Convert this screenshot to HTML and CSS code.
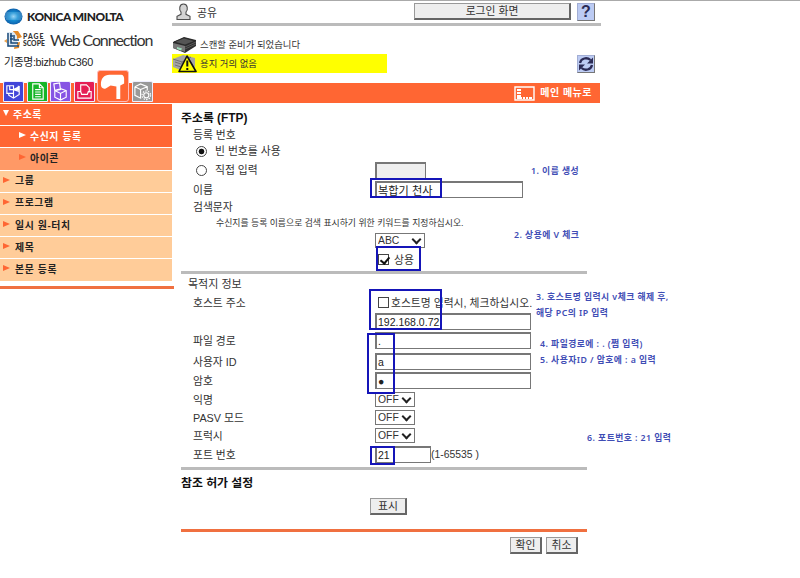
FILE: index.html
```
<!DOCTYPE html>
<html lang="ko">
<head>
  <meta charset="UTF-8" />
  <meta name="viewport" content="width=device-width, initial-scale=1.0"/>
  <title>PageScope Web Connection</title>
  <link rel="stylesheet" href="styles.css">
</head>
<body>
  <header class="header">
    <div class="brand">
      <div class="konica">
        <svg width="19" height="17" viewBox="0 0 19 17">
          <defs>
            <radialGradient id="globe" cx=".5" cy=".5" r=".6">
              <stop offset="0" stop-color="#8fd0f4"/>
              <stop offset=".4" stop-color="#168ed3"/>
              <stop offset="1" stop-color="#0a4f9c"/>
            </radialGradient>
          </defs>
          <ellipse cx="9.5" cy="8.5" rx="9" ry="8" fill="url(#globe)"/>
          <path d="M2 5h15M1 7h17M1 9h17M2 11h15" stroke="#c5e9fb" stroke-width=".4"/>
        </svg>
        <span>KONICA MINOLTA</span>
      </div>
      <div class="pagescope">
        <svg width="18" height="18" viewBox="0 0 18 18">
          <path d="M9 0h5l4 6-5 2z" fill="#e58a28"/>
          <path d="M0 10l6-4v8z" fill="#e9a04c"/>
          <path d="M11 12l5-1-1 6-5 1z" fill="#e58a28"/>
          <path d="M3 1h7l3 4v11H3z" fill="#dce8f4"/>
          <path d="M4 2v13h11M7 2v10h7M10 4v5h5M6 5h3M6 8h3" fill="none" stroke="#1b4978" stroke-width="1.500"/>
        </svg>
        <span class="ps-small"><span>PAGE</span><span>SCOPE</span></span>
        <span class="ps-title">Web Connection</span>
      </div>
      <div class="model">기종명:bizhub C360</div>
    </div>

    <div class="status">
      <div class="user-row">
        <svg class="person" width="15" height="18" viewBox="0 0 15 18">
          <path d="M1 16.500v-3.200l4-2V9C2.800 6.500 3.200 1 7.500 1s4.700 5.500 2.500 8v2.300l4 2v3.200z" fill="#d3d3d3" stroke="#4d4d4d" stroke-width="1.100"/>
        </svg>
        <span class="user-name">공유</span>
        <button class="btn login" type="button">로그인 화면</button>
        <button class="icon-btn" type="button">?</button>
      </div>
      <div class="device-row">
        <div class="messages">
          <div class="message">
            <svg width="25" height="16" viewBox="0 0 25 16">
              <path d="M1 5L12 0l12 3v6l-11 7L1 11z" fill="#2e2e2e"/>
              <path d="M2 5l10-4 11 3-10 4z" fill="#555" stroke="#222" stroke-width=".7"/>
              <path d="M1 6l12 3v6L1 11z" fill="#777"/>
              <path d="M5 10l5 1.500-1 2-4-1.500z" fill="#9fe0bd"/>
              <path d="M13 10l11-5M13 12l11-5" stroke="#777" stroke-width=".6"/>
            </svg>
            <span>스캔할 준비가 되었습니다</span>
          </div>
          <div class="message warning">
            <svg width="25" height="19" viewBox="0 0 25 19">
              <path d="M1 5l10-4 12 3v9l-10 5-12-5z" fill="#a5a5a5"/>
              <path d="M1 5l9 3v9M3 8l6 2M3 11l6 2M10 8l9-5" fill="none" stroke="#666" stroke-width=".8"/>
              <path d="M15 2L24 17.500H7z" fill="#ff0" stroke="#111" stroke-width="1.600" stroke-linejoin="round"/>
              <path d="M15.300 6.500v6M15.300 14v2" stroke="#111" stroke-width="2"/>
            </svg>
            <span>용지 거의 없음</span>
          </div>
        </div>
        <button class="icon-btn" type="button">
          <svg width="16" height="16" viewBox="0 0 16 16">
            <path d="M2 7c1-5 7-6 10.500-3M14 9c-1 5-7 6-10.500 3" fill="none" stroke="#2b2b55" stroke-width="2.300"/>
            <path d="M15 1.500v6H9zM1 14.500v-6h6z" fill="#2b2b55"/>
          </svg>
        </button>
      </div>
    </div>
  </header>

  <nav class="tabs">
    <span class="tab blue">
      <svg viewBox="0 0 20 20"><path d="M3 4h7v8H3zM6 4v4h9V4M10 8l6-3v8l-6 4-5-3v-2M10 8v9M10 8l6 2"/></svg>
    </span>
    <span class="tab green">
      <svg viewBox="0 0 20 20"><path d="M5 2h7l4 4v12H5zM12 2v4h4M7.500 8h6M7.500 10.500h6M7.500 13h6M7.500 15.500h6"/></svg>
    </span>
    <span class="tab purple">
      <svg viewBox="0 0 20 20"><path d="M3 2l6-1 1 7-6 1zM4 9l6-2 6 2v7l-6 3-6-3zM4 9l6 3 6-3M10 12v7"/></svg>
    </span>
    <span class="tab red">
      <svg viewBox="0 0 20 20"><path d="M6 11V3h6l3 3v5M3 10v7h14v-7h-3l-1 3H7l-1-3z"/></svg>
    </span>
    <span class="tab current">
      <svg viewBox="0 0 31 31"><path d="M3 14c0-6 3-10 9-10h12c2 0 3 2 3 4v5l-4 2v14h-4V16l-6-1-5 3c-3 1-5-1-5-4z" fill="#fff" stroke="none"/></svg>
    </span>
    <span class="tab gray">
      <svg viewBox="0 0 20 20"><path d="M2 5l6-3 7 3v4M2 5v9l6 3V8L2 5M8 8l7-3"/><circle cx="14" cy="14" r="2.700"/><circle cx="14" cy="14" r="4.500" stroke-dasharray="1.500 1.300"/></svg>
    </span>
    <a class="main-menu">
      <svg width="21" height="15" viewBox="0 0 21 15"><path d="M1 1h19v13H1z" fill="none" stroke="#fff" stroke-width="1.400"/><path d="M3 4h4M3 7h4M3 10h4M3 12h5M9 12h2M12 12h2M15 12h3" stroke="#fff" stroke-width="1.800"/></svg>
      <span>메인 메뉴로</span>
    </a>
  </nav>

  <div class="page">
    <aside class="sidebar">
      <ul class="menu">
        <li class="open">주소록</li>
        <li class="sub selected">수신지 등록</li>
        <li class="sub">아이콘</li>
        <li>그룹</li>
        <li>프로그램</li>
        <li>일시 원-터치</li>
        <li>제목</li>
        <li>본문 등록</li>
      </ul>
    </aside>

    <main class="content">
      <form>
        <h1>주소록 (FTP)</h1>
        <div class="row h16"><span class="label">등록 번호</span></div>
        <div class="row h18"><label class="label radio"><input type="radio" name="no" checked><span>빈 번호를 사용</span></label></div>
        <div class="row h20">
          <label class="label radio"><input type="radio" name="no"><span>직접 입력</span></label>
          <input class="text number" type="text" disabled>
        </div>
        <div class="row h18"><span class="label">이름</span><input class="text name" type="text" value="복합기 천사"></div>
        <div class="row h16"><span class="label">검색문자</span></div>
        <p class="hint">수신지를 등록 이름으로 검색 표시하기 위한 키워드를 지정하십시오.</p>
        <div class="row h16"><span class="label"></span><span class="select wide"><select><option>ABC</option></select></span></div>
        <div class="row h23"><span class="label"></span><label class="check favorite"><input type="checkbox" checked><span>상용</span></label></div>
        <hr>

        <h2>목적지 정보</h2>
        <div class="row h19"><span class="label">호스트 주소</span><label class="check host"><input type="checkbox"><span>호스트명 입력시, 체크하십시오.</span></label></div>
        <div class="row h18"><span class="label"></span><input class="text" type="text" value="192.168.0.72"></div>
        <div class="row h21"><span class="label">파일 경로</span><input class="text" type="text" value="."></div>
        <div class="row h20"><span class="label">사용자 ID</span><input class="text" type="text" value="a"></div>
        <div class="row h19"><span class="label">암호</span><input class="text" type="text" value="●"></div>
        <div class="row h18"><span class="label">익명</span><span class="select"><select><option>OFF</option></select></span></div>
        <div class="row h18"><span class="label">PASV 모드</span><span class="select"><select><option>OFF</option></select></span></div>
        <div class="row h19"><span class="label">프럭시</span><span class="select"><select><option>OFF</option></select></span></div>
        <div class="row h19"><span class="label">포트 번호</span><input class="text port" type="text" value="21"><span class="range">(1-65535 )</span></div>
        <hr class="bottom">

        <h1 class="permission">참조 허가 설정</h1>
        <div class="show"><button class="btn" type="button">표시</button></div>
        <hr class="orange">
        <div class="actions">
          <button class="btn" type="button">확인</button>
          <button class="btn" type="button">취소</button>
        </div>
      </form>
    </main>
  </div>

  <!-- guide marks over the form -->
  <div class="mark mark-name"></div>
  <div class="mark mark-favorite"></div>
  <div class="mark mark-host"></div>
  <div class="mark mark-login"></div>
  <div class="mark mark-port"></div>
  <div class="note note1">1. 이름 생성</div>
  <div class="note note2">2. 상용에 V 체크</div>
  <div class="note note3">3. 호스트명 입력시 v체크 해제 후,<br>해당 PC의 IP 입력</div>
  <div class="note note4">4. 파일경로에 : . (쩜 입력)</div>
  <div class="note note5">5. 사용자ID / 암호에 : a 입력</div>
  <div class="note note6">6. 포트번호 : 21 입력</div>
</body>
</html>
```
FILE: styles.css
```
* {
  box-sizing: border-box;
}

body {
  margin: 0;
  height: 578px;
  position: relative;
  overflow: hidden;
  background: #fff;
  border-top: 1px solid #aaa;
  color: #333;
  font-family: "Liberation Sans", "Noto Sans CJK KR", sans-serif;
  font-size: 10.8px;
  line-height: 16px;
  white-space: nowrap;
}

input, button, select {
  font: inherit;
  color: inherit;
  margin: 0;
}

svg {
  display: block;
  flex: none;
}

/* header */
.header {
  display: flex;
  height: 82px;
}

.brand {
  width: 172px;
  padding: 7px 0 0 4px;
}

.konica {
  display: flex;
  align-items: center;
  gap: 4px;
  height: 17px;
  font-family: Lato, sans-serif;
  font-weight: 900;
  font-size: 11.9px;
  letter-spacing: -.45px;
  color: #222;
}

.pagescope {
  display: flex;
  align-items: center;
  height: 18px;
  margin-top: 6px;
  font-family: Lato, sans-serif;
}

.ps-small {
  display: flex;
  flex-direction: column;
  width: 23px;
  margin-left: 1px;
  font-size: 6.8px;
  font-weight: 900;
  line-height: 7px;
}

.ps-small span:first-child {
  letter-spacing: 1px;
}

.ps-title {
  margin-left: 4px;
  font-size: 16px;
  letter-spacing: -1.15px;
  font-variant-ligatures: none;
}

.model {
  margin-top: 5px;
  color: #222;
  letter-spacing: -.3px;
}

.status {
  width: 429px;
}

.user-row {
  display: flex;
  align-items: center;
  height: 25px;
  padding: 1px 6px 2px 4px;
  border-bottom: 3px solid #bbb;
}

.user-name {
  margin: 2px 0 0 6px;
}

.btn {
  height: 17px;
  padding: 0;
  background: #eee;
  border: 1px solid #999;
  border-right: 2px solid #666;
  border-bottom: 2px solid #666;
  line-height: 14px;
}

.login {
  width: 157px;
  margin: 0 6px 0 auto;
}

.icon-btn {
  display: flex;
  align-items: center;
  justify-content: center;
  width: 18px;
  height: 18px;
  padding: 0;
  background: #bccbf3;
  border: 1px solid #a2aed5;
  border-right-color: #777;
  border-bottom-color: #777;
  color: #2b2b55;
  font-size: 16px;
  font-weight: bold;
}

.device-row {
  display: flex;
  justify-content: space-between;
  align-items: flex-end;
  padding: 9px 6px 0 0;
}

.message {
  display: flex;
  align-items: center;
  gap: 3px;
  width: 215px;
  height: 19px;
  font-size: 9.4px;
}

.warning {
  background: #ff0;
}

/* tabs */
.tabs {
  display: flex;
  align-items: flex-end;
  gap: 2.5px;
  width: 600px;
  height: 20px;
  padding-left: 3px;
  background: #f63;
}

.tab {
  width: 21px;
  height: 21px;
  margin-bottom: 1px;
  border: 1px solid #eef;
  border-radius: 2px 2px 0 0;
}

.tab svg {
  width: 100%;
  height: 100%;
  fill: none;
  stroke: #fff;
  stroke-width: 1.2;
}

.blue { background: #4145d8; }
.green { background: #16b528; }
.purple { background: #8654e4; }
.red { background: #e51d55; }
.gray { background: #999; }

.tab.current {
  width: 32px;
  height: 32px;
  background: #f63;
  border-color: #fbb;
  border-radius: 3px;
}

.main-menu {
  display: flex;
  align-items: center;
  gap: 5px;
  height: 20px;
  margin: 0 8px 0 auto;
  color: #fff;
  font-size: 10px;
  font-weight: bold;
  letter-spacing: .5px;
}

/* side menu */
.page {
  display: flex;
}

.sidebar {
  width: 181px;
}

.menu {
  width: 174px;
  margin: 0;
  padding: 1px 0 4px;
  list-style: none;
  border-bottom: 3px solid #f07040;
}

.menu li {
  display: flex;
  align-items: center;
  width: 172px;
  height: 21.2px;
  margin-bottom: 1px;
  padding-left: 3px;
  background: #fc9;
  color: #222;
  font-size: 9.9px;
  font-weight: bold;
  letter-spacing: .6px;
}

.menu li::before {
  content: "";
  margin: -3px 5px 0 0;
  border: solid transparent;
  border-width: 3.5px 0 3.5px 7px;
  border-left-color: #f63;
}

.menu .open {
  background: #f63;
  color: #fff;
}

.menu .open::before {
  border: solid transparent;
  border-width: 6px 3.5px 0;
  border-top-color: #fff;
  margin-right: 4px;
}

.menu .sub {
  padding-left: 19px;
  background: #f96;
}

.menu .sub::before {
  margin-right: 4px;
}

.menu .selected {
  background: #f63;
  color: #fff;
}

.menu .selected::before {
  border-left-color: #fff;
}

/* form */
.content {
  width: 406px;
  padding-top: 6px;
}

h1 {
  height: 17px;
  margin: 0;
  font-size: 11.9px;
  line-height: 19px;
  color: #111;
}

h2 {
  height: 19px;
  margin: 0;
  padding-left: 7px;
  font-size: 11px;
  font-weight: normal;
  line-height: 20px;
}

.row {
  display: flex;
  align-items: center;
}

.h16 { height: 16px; }
.h18 { height: 18px; }
.h19 { height: 19px; }
.h20 { height: 20px; }
.h21 { height: 21px; }
.h23 { height: 23px; }

.label {
  width: 194px;
  padding: 1px 0 0 12px;
  flex: none;
}

.radio {
  display: flex;
  align-items: center;
  gap: 8px;
  padding: 0 0 0 15px;
}

.radio input {
  appearance: none;
  width: 11px;
  height: 11px;
  border: 1px solid #444;
  border-radius: 50%;
}

.radio input:checked {
  background: radial-gradient(circle, #111 0 2.5px, #fff 3.2px);
}

.text {
  width: 156px;
  height: 17px;
  padding: 0 1px;
  background: #fff;
  border: 1px solid #777;
  border-top: 2px solid #777;
  border-left: 2px solid #777;
  border-radius: 0;
  font-size: 10.5px;
  color: #222;
}

.number {
  width: 51px;
  background: #eee;
}

.name {
  width: 148px;
  font-size: 11.2px;
}

.port { width: 56px; }

.range {
  font-size: 10.4px;
}

.hint {
  height: 18px;
  margin: 0;
  padding-left: 35px;
  font-size: 8.85px;
  line-height: 19px;
}

.select {
  position: relative;
}

.select select {
  display: block;
  appearance: none;
  width: 40px;
  height: 15px;
  padding: 0 2px;
  background: #fff;
  border: 1px solid #777;
  border-radius: 0;
  font-size: 10.4px;
  line-height: 13px;
}

.select.wide select {
  width: 50px;
}

/* arrow on top of the select */
.select::after {
  content: "";
  position: absolute;
  right: 5px;
  top: 3px;
  width: 5px;
  height: 5px;
  border: solid #222;
  border-width: 0 2px 2px 0;
  transform: rotate(45deg);
}

.check {
  display: flex;
  align-items: center;
  padding-left: 3px;
}

.check input {
  appearance: none;
  width: 11px;
  height: 11px;
  border: 1px solid #444;
}

.check input:checked::before {
  content: "";
  display: block;
  width: 4px;
  height: 7px;
  margin: 0 0 0 3px;
  border: solid #111;
  border-width: 0 2px 2px 0;
  transform: rotate(40deg);
}

.check span { margin-left: 2px; }
.favorite span { margin-left: 5px; }

hr {
  height: 3px;
  margin: 0;
  border: 0;
  background: #bbb;
}

.bottom {
  margin: 3px 0 4px;
}

.show {
  padding: 7px 0 13px 189px;
}

.show .btn {
  display: block;
  width: 37px;
}

.permission {
  line-height: 18px;
}

.orange {
  margin-top: 1px;
  background: #f07040;
}

.actions {
  display: flex;
  justify-content: flex-end;
  gap: 4px;
  padding: 5px 9px 0 0;
}

.actions .btn {
  width: 32px;
}

/* guide marks */
.mark {
  position: absolute;
  border: 2px solid #1515b8;
}

.mark-name { left: 370px; top: 177px; width: 72px; height: 20px; }
.mark-favorite { left: 376px; top: 245px; width: 45px; height: 25px; }
.mark-host { left: 369px; top: 288px; width: 73px; height: 41px; }
.mark-login { left: 367px; top: 332px; width: 28px; height: 61px; }
.mark-port { left: 370px; top: 445px; width: 25px; height: 19px; }

.note {
  position: absolute;
  color: #3f4db5;
  font-family: "Noto Sans", "Noto Sans CJK KR", sans-serif;
  font-size: 8.8px;
  font-weight: 600;
  letter-spacing: .45px;
}

.note1 { left: 531px; top: 162px; }
.note2 { left: 514px; top: 226px; }
.note3 { left: 536px; top: 288px; }
.note4 { left: 540px; top: 335px; }
.note5 { left: 540px; top: 351px; }
.note6 { left: 587px; top: 429px; }
```
